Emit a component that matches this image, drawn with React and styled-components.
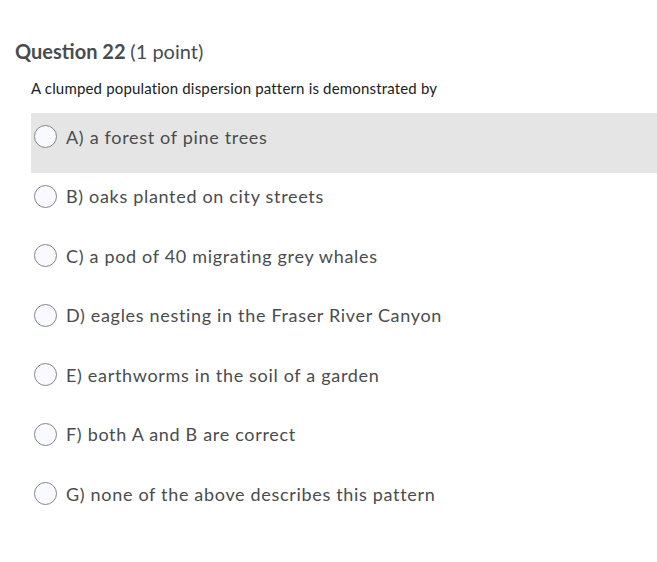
import React from 'react';
import styled, { createGlobalStyle } from 'styled-components';

const GlobalStyle = createGlobalStyle`
  body {
    margin: 0;
    background: #fff;
    font-family: Lato, "Liberation Sans", sans-serif;
  }
`;

const Wrapper = styled.div`
  padding: 38px 0 0 15px;
`;

const Title = styled.h2`
  margin: 0;
  font-size: 20px;
  line-height: 26px;
  font-weight: 700;
  color: #494c4e;
  span {
    font-weight: 400;
  }
`;

const Prompt = styled.p`
  margin: 15px 0 16px 16px;
  font-size: 15px;
  letter-spacing: 0.17px;
  line-height: 18px;
  color: #202122;
`;

const Options = styled.div`
  margin-left: 16px;
  display: flex;
  flex-direction: column;
`;

const Option = styled.label`
  display: flex;
  align-items: center;
  gap: 9px;
  height: 59.5px;
  box-sizing: border-box;
  padding: 0 0 12px 3px;
  background: ${p => (p.$active ? '#e5e5e5' : 'transparent')};
  font-size: 18px;
  letter-spacing: 0.68px;
  line-height: 22px;
  color: #494c4e;
  cursor: pointer;
`;

const Radio = styled.span`
  width: 21px;
  height: 21px;
  border-radius: 50%;
  border: 1px solid #868686;
  background: #f9faff;
  flex-shrink: 0;
`;

const choices = [
  'A) a forest of pine trees',
  'B) oaks planted on city streets',
  'C) a pod of 40 migrating grey whales',
  'D) eagles nesting in the Fraser River Canyon',
  'E) earthworms in the soil of a garden',
  'F) both A and B are correct',
  'G) none of the above describes this pattern',
];

export default function App() {
  return (
    <Wrapper>
      <GlobalStyle />
      <Title>
        Question 22 <span>(1 point)</span>
      </Title>
      <Prompt>A clumped population dispersion pattern is demonstrated by</Prompt>
      <Options>
        {choices.map((c, i) => (
          <Option key={c} $active={i === 0}>
            <Radio />
            {c}
          </Option>
        ))}
      </Options>
    </Wrapper>
  );
}
